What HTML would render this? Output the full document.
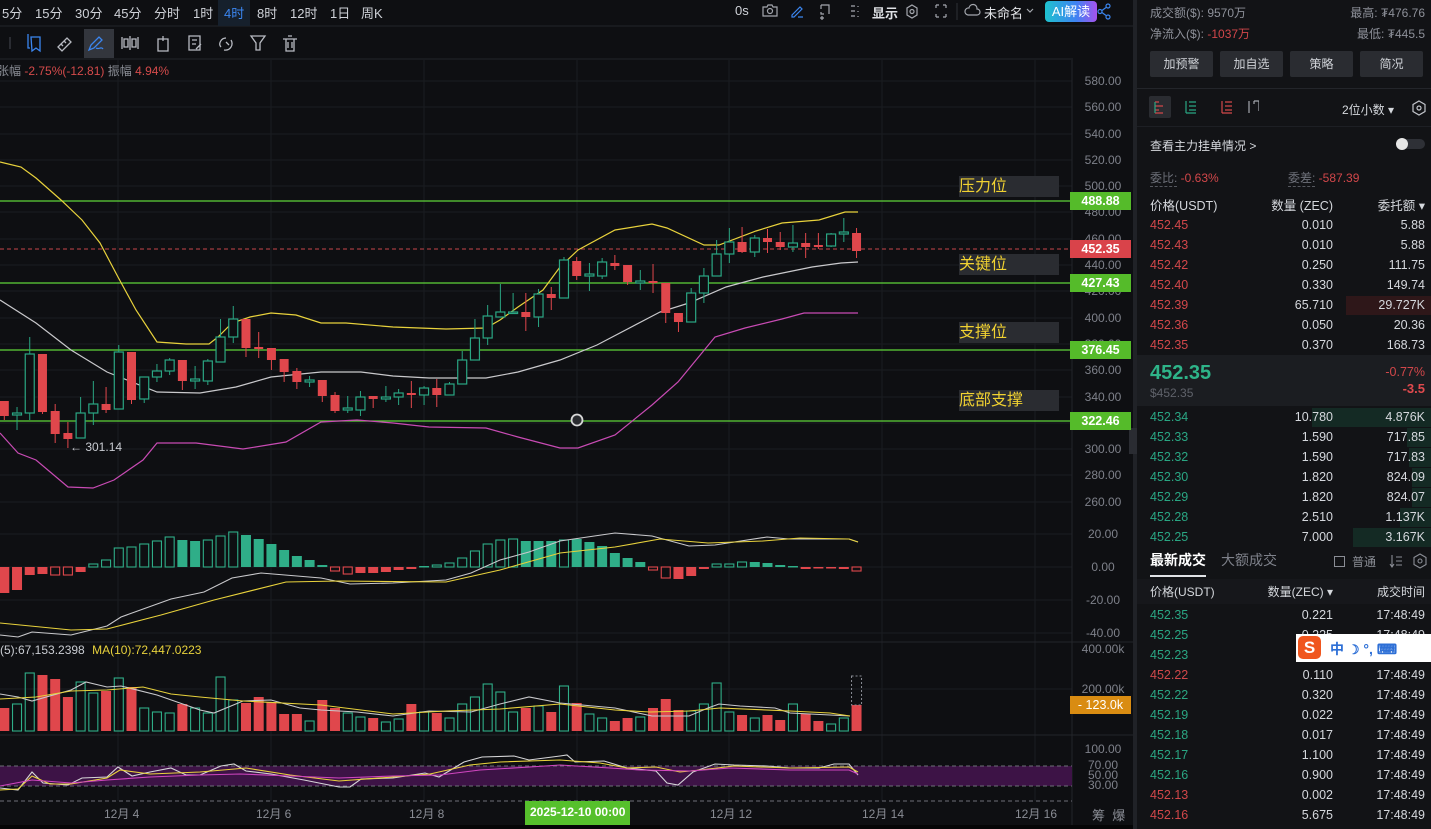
<!DOCTYPE html>
<html><head><meta charset="utf-8">
<style>
*{margin:0;padding:0;box-sizing:border-box}
body{width:1431px;height:829px;background:#0e0f12;overflow:hidden;font-family:"Liberation Sans","Noto Sans CJK SC",sans-serif;color:#c9ccd2;position:relative}
.a{position:absolute;white-space:nowrap}
.tab{position:absolute;top:3px;font-size:13px;color:#cfd2d8}
.ax{position:absolute;left:1074px;width:58px;text-align:center;font-size:12px;color:#7e818a}
.tag{position:absolute;left:1070px;width:61px;height:18px;font-size:12.5px;font-weight:bold;color:#fff;text-align:center;line-height:18px;background:#55bb2a}
.lbl{position:absolute;left:959px;width:100px;height:21px;background:#2a2c31;color:#f1d231;font-size:16px;line-height:21px}
.date{position:absolute;top:805px;font-size:12px;color:#8a8d95}
#rp{position:absolute;left:1137px;top:0;width:294px;height:829px;background:#121316}
.g{color:#2aa683}.r{color:#d2474a}
.row{position:absolute;left:13px;width:275px;height:20px;font-size:12.5px;line-height:20px}
.row span{position:absolute}
.c1{left:0}.c2{right:92px}.c3{right:0}
.btn{position:absolute;top:51px;width:63px;height:26px;background:#2a2c31;border-radius:2px;font-size:12px;line-height:26px;text-align:center;color:#d0d3d8}
</style></head><body>

<svg class="a" style="left:0;top:0" width="1137" height="829" id="sv">
<g stroke="#1b1d22" stroke-width="1">
<line x1="0" y1="26" x2="1137" y2="26" stroke="#23252a"/>
<line x1="0" y1="59" x2="1073" y2="59" stroke="#23252a"/>
</g>
<g id="grid" stroke="#1a1c21" stroke-width="1"></g>
<line x1="1072" y1="60" x2="1072" y2="829" stroke="#23252a"/>
<!-- level lines -->
<g stroke="#5fd33a" stroke-width="1.2">
<line x1="0" y1="201" x2="1072" y2="201"/><line x1="0" y1="283" x2="1072" y2="283"/>
<line x1="0" y1="350" x2="1072" y2="350"/><line x1="0" y1="421" x2="1072" y2="421"/>
</g>
<line x1="0" y1="249" x2="1072" y2="249" stroke="#c6454a" stroke-dasharray="4,3"/>
<g fill="none" stroke-width="1.2">
<polyline stroke="#e8d23c" points="0,162 21,167 36,178 61,200 82,220 100,243 118,277 136,310 157,342 186,344 209,344 218,337 232,323 250,317 271,313 296,315 321,323 346,323 393,327 446,329 486,328 500,320 518,307 543,290 560,267 578,250 615,230 652,224 667,228 704,245 719,245 756,231 782,223 819,220 845,212 858,212"/>
<polyline stroke="#c9c9cc" points="0,300 36,323 71,350 107,372 157,392 200,393 236,387 271,377 321,372 361,372 393,376 429,378 486,378 518,372 560,360 597,345 660,312 689,303 726,287 763,277 812,267 841,263 858,262"/>
<polyline stroke="#c84bb4" points="0,433 18,453 36,460 68,487 93,488 114,480 143,460 157,443 196,443 243,449 286,442 321,422 357,420 393,423 429,427 486,428 518,437 560,448 578,448 615,435 652,405 678,382 715,337 745,328 782,319 804,313 858,313"/>
</g>
<g id="cdl"></g>
<circle cx="577" cy="420" r="5.5" fill="#2a2c30" stroke="#d8d8d8" stroke-width="1.8"/>
<!-- macd -->
<line x1="0" y1="642" x2="1137" y2="642" stroke="#23252a"/>
<line x1="0" y1="735" x2="1137" y2="735" stroke="#23252a"/>
<g id="macd"></g>
<g fill="none" stroke-width="1.1">
<polyline stroke="#c9c9cc" points="0,635 18,637 32,632 71,635 107,626 121,617 171,599 204,592 232,578 261,573 321,578 350,584 393,583 446,580 471,573 500,560 529,552 560,541 615,533 652,536 689,546 715,545 767,537 789,539 849,539 858,542"/>
<polyline stroke="#e8d23c" points="0,623 71,630 107,629 161,615 214,600 286,582 339,581 446,582 500,570 560,553 615,547 660,539 708,543 763,541 800,538 849,539 858,542"/>
</g>
<g id="vol"></g>
<g fill="none" stroke-width="1.1">
<polyline stroke="#c9c9cc" points="0,694 18,697 32,701 71,690 86,682 107,687 121,686 157,695 200,710 214,713 243,701 271,700 300,708 321,710 357,712 393,716 429,711 471,712 500,704 529,697 560,703 615,708 652,716 689,716 708,708 719,704 740,706 775,708 790,713 830,715 850,716"/>
<polyline stroke="#e8d23c" points="0,699 36,697 71,691 107,690 143,687 171,694 200,697 243,701 321,705 393,714 446,711 500,709 560,704 615,710 650,712 689,711 720,708 790,711 830,713 850,716"/>
</g>
<!-- rsi -->
<rect x="0" y="766" width="1072" height="20" fill="#3d1346"/>
<g stroke="#6d6f78" stroke-dasharray="4,3"><line x1="0" y1="766" x2="1072" y2="766"/><line x1="0" y1="786" x2="1072" y2="786"/><line x1="0" y1="801" x2="1072" y2="801"/></g>
<g fill="none" stroke-width="1.1">
<polyline stroke="#d6d6d8" points="0,788 18,790 32,772 43,783 68,785 82,778 107,777 118,767 132,776 150,772 171,768 186,775 200,775 221,766 234,764 246,771 271,774 304,780 339,787 350,787 361,779 393,778 425,773 439,777 464,762 482,757 514,756 529,760 560,756 567,755 575,762 604,761 627,768 656,771 667,783 678,785 693,772 715,764 734,765 767,766 790,768 819,768 834,764 849,764 858,775"/>
<polyline stroke="#e8d23c" points="0,790 18,789 32,776 50,784 71,784 107,778 120,770 150,774 200,772 246,768 290,775 339,781 393,777 430,774 470,765 500,762 560,760 600,763 627,768 656,767 680,772 700,770 734,766 790,768 849,767 858,772"/>
<polyline stroke="#d046c0" points="0,786 32,780 71,783 107,780 150,777 200,775 240,774 290,776 339,778 393,776 440,775 480,770 530,767 560,765 610,768 640,770 690,771 730,768 790,770 849,770 858,774"/>
</g>
<rect x="0" y="825" width="1137" height="4" fill="#050506"/>
<rect x="525" y="801" width="105" height="24" fill="#56c02c"/>
<rect x="1133" y="0" width="4" height="829" fill="#202227"/>
<rect x="1129" y="428" width="8" height="26" fill="#2a2c32"/>
</svg>

<!-- top bar -->
<div class="tab" style="left:2px">5分</div><div class="tab" style="left:35px">15分</div><div class="tab" style="left:75px">30分</div><div class="tab" style="left:114px">45分</div><div class="tab" style="left:154px">分时</div><div class="tab" style="left:193px">1时</div>
<div class="a" style="left:218px;top:0;width:32px;height:26px;background:#16202c"></div>
<div class="tab" style="left:224px;color:#3b86f0">4时</div><div class="tab" style="left:257px">8时</div><div class="tab" style="left:290px">12时</div><div class="tab" style="left:330px">1日</div><div class="tab" style="left:361px">周K</div>

<!-- toolbar icons -->
<div class="a" style="left:84px;top:29px;width:30px;height:29px;background:#33363d"></div>
<svg class="a" style="left:0;top:28px" width="310" height="30" fill="none" stroke="#b8bbc2" stroke-width="1.3">
<line x1="10" y1="9" x2="10" y2="21" stroke="#3a3d44"/>
<path d="M28 6v14h2M31 9h9v14l-4-3-4 3z" stroke="#3b86f0"/>
<path d="M58 19l9-9 4 4-9 9zM61 16l2 2M64 13l2 2"/>
<path d="M89 22l2-5 8-8 3 3-8 8zM96 20c3 2 5-2 7 1" stroke="#3b86f0"/>
<path d="M122 9v12M124 11h4v8h-4zM130 8v14M132 11h4v8h-4zM138 9v12"/>
<path d="M158 11h10v12h-10zM163 8v5"/>
<path d="M189 8h11v14h-11zM192 12h5M192 16h4M196 21l5-5"/>
<path d="M221 19c-3-3 0-9 5-9M224 22c6 1 10-5 7-10M226 14l3 3"/>
<path d="M251 8h14l-5 7v7h-4v-7z"/>
<path d="M283 11h14M286 11v12h8v-12M288 8h4M288 14v6M292 14v6"/>
</svg>
<div class="a" style="left:-3px;top:62px;font-size:12px;color:#8a8d95">张幅 <span style="color:#d54b4b">-2.75%(-12.81)</span> 振幅 <span style="color:#d54b4b">4.94%</span></div>

<!-- top right tools -->
<div class="a" style="left:735px;top:3px;font-size:13px;color:#cfd2d8">0s</div>
<svg class="a" style="left:760px;top:0" width="370" height="24" fill="none" stroke="#a4a7ae" stroke-width="1.2">
<path d="M3 7h4l1-2h4l1 2h4v9h-14z"/><circle cx="10" cy="11" r="2.5"/>
<path d="M32 15l8-8 2 2-8 8h-2zM38 17h5" stroke="#3b86f0"/>
<path d="M61 5h8v9M61 5v4M64 14h-3v-2M62 16v4M60 18h4"/>
<path d="M91 6h4M91 11h4M91 16h4M98 6v1M98 11v1M98 16v1"/>
<path d="M152 5l5 3v7l-5 3-5-3v-7z"/><circle cx="152" cy="11.5" r="2"/>
<path d="M176 5h3M176 5v3M186 5h-3M186 5v3M176 17h3M176 17v-3M186 17h-3M186 17v-3"/>
<line x1="197" y1="3" x2="197" y2="20" stroke="#2a2c31"/>
<path d="M208 15h9a3 3 0 0 0 0-6a4 4 0 0 0-8-1a3.5 3.5 0 0 0-1 7z"/>
<path d="M267 9l3 3 3-3"/>
<circle cx="348" cy="6" r="2" stroke="#3b86f0"/><circle cx="348" cy="17" r="2" stroke="#3b86f0"/><circle cx="340" cy="11.5" r="2" stroke="#3b86f0"/><path d="M342 10.5l4-3M342 12.5l4 3" stroke="#3b86f0"/>
</svg>
<div class="a" style="left:872px;top:3px;font-size:13px;color:#e0e2e6;font-weight:bold">显示</div>
<div class="a" style="left:984px;top:3px;font-size:13px;color:#e0e2e6">未命名</div>
<div class="a" style="left:1045px;top:1px;width:52px;height:21px;border-radius:4px;background:linear-gradient(90deg,#1fc2cf,#3f82f2 60%,#a553ee);color:#fff;font-size:13px;line-height:21px;text-align:center">AI解读</div>

<!-- labels -->
<div class="lbl" style="top:176px">压力位</div>
<div class="lbl" style="top:254px">关键位</div>
<div class="lbl" style="top:322px">支撑位</div>
<div class="lbl" style="top:390px">底部支撑</div>
<div class="a" style="left:70px;top:440px;font-size:12px;color:#c9ccd2">← 301.14</div>

<!-- axis -->
<div class="ax" style="top:74px">580.00</div><div class="ax" style="top:100px">560.00</div><div class="ax" style="top:127px">540.00</div><div class="ax" style="top:153px">520.00</div><div class="ax" style="top:179px">500.00</div><div class="ax" style="top:205px">480.00</div><div class="ax" style="top:232px">460.00</div><div class="ax" style="top:258px">440.00</div><div class="ax" style="top:284px">420.00</div><div class="ax" style="top:311px">400.00</div><div class="ax" style="top:337px">380.00</div><div class="ax" style="top:363px">360.00</div><div class="ax" style="top:390px">340.00</div><div class="ax" style="top:416px">320.00</div><div class="ax" style="top:442px">300.00</div><div class="ax" style="top:468px">280.00</div><div class="ax" style="top:495px">260.00</div>
<div class="tag" style="top:192px">488.88</div>
<div class="tag" style="top:240px;background:#d9434a">452.35</div>
<div class="tag" style="top:274px">427.43</div>
<div class="tag" style="top:341px">376.45</div>
<div class="tag" style="top:412px">322.46</div>
<div class="ax" style="top:527px">20.00</div><div class="ax" style="top:560px">0.00</div><div class="ax" style="top:593px">-20.00</div><div class="ax" style="top:626px">-40.00</div>
<div class="ax" style="top:642px">400.00k</div><div class="ax" style="top:682px">200.00k</div>
<div class="tag" style="top:696px;background:#d98c12;font-weight:normal">- 123.0k</div>
<div class="ax" style="top:742px">100.00</div><div class="ax" style="top:758px">70.00</div><div class="ax" style="top:768px">50.00</div><div class="ax" style="top:778px">30.00</div>
<div class="a" style="left:0;top:643px;font-size:12px;color:#c9ccd2">(5):67,153.2398 <span style="color:#e8d23c;margin-left:4px">MA(10):72,447.0223</span></div>
<div class="date" style="left:104px">12月 4</div><div class="date" style="left:256px">12月 6</div><div class="date" style="left:409px">12月 8</div>
<div class="date" style="left:530px;color:#fff;font-weight:bold">2025-12-10 00:00</div>
<div class="date" style="left:710px">12月 12</div><div class="date" style="left:862px">12月 14</div><div class="date" style="left:1015px">12月 16</div>
<div class="date" style="left:1092px;font-size:13px">筹&nbsp;&nbsp;爆</div>

<!-- right panel -->
<div id="rp">
<div class="a" style="left:13px;top:4px;font-size:12px;color:#8d9099">成交额($): 9570万</div>
<div class="a" style="right:6px;top:4px;font-size:12px;color:#8d9099">最高: ₮476.76</div>
<div class="a" style="left:13px;top:25px;font-size:12px;color:#8d9099">净流入($): <span class="r">-1037万</span></div>
<div class="a" style="right:6px;top:25px;font-size:12px;color:#8d9099">最低: ₮445.5</div>
<div class="btn" style="left:13px">加预警</div><div class="btn" style="left:83px">加自选</div><div class="btn" style="left:153px">策略</div><div class="btn" style="left:223px">简况</div>
<div class="a" style="left:0;top:88px;width:294px;height:1px;background:#23252a"></div>
<div class="a" style="left:12px;top:96px;width:22px;height:22px;background:#2a2c31;border-radius:2px"></div>
<svg class="a" style="left:12px;top:96px" width="110" height="22" fill="none" stroke-width="1.2">
<path d="M6 6h4M6 10h8M6 14h4M6 17h8" stroke="#d2474a"/><path d="M6 6v11" stroke="#2aa683"/>
<path d="M37 5v12M40 6h7M40 10h7M40 14h7M37 17h10" stroke="#2aa683"/>
<path d="M73 5v12M76 6h7M76 10h7M76 14h7M73 17h10" stroke="#d2474a"/>
<path d="M105 5h5v10M105 5v3M100 5v12" stroke="#a4a7ae"/>
</svg>
<div class="a" style="left:205px;top:101px;font-size:12px;color:#d5d8dd">2位小数 ▾</div>
<svg class="a" style="left:274px;top:99px" width="16" height="18" fill="none" stroke="#c2c5cb" stroke-width="1.2"><path d="M8 2l6 3.5v7L8 16l-6-3.5v-7z"/><circle cx="8" cy="9" r="2"/></svg>
<div class="a" style="left:0;top:126px;width:294px;height:1px;background:#1d1f24"></div>
<div class="a" style="left:13px;top:137px;font-size:12px;color:#d5d8dd">查看主力挂单情况 &gt;</div>
<div class="a" style="left:259px;top:139px;width:29px;height:10px;border-radius:5px;background:#2e3036"></div>
<div class="a" style="left:259px;top:138px;width:12px;height:12px;border-radius:6px;background:#e6e6e6"></div>
<div class="a" style="left:13px;top:169px;font-size:12px;color:#6e717a">委比: <span class="r">-0.63%</span></div>
<div class="a" style="left:151px;top:169px;font-size:12px;color:#6e717a">委差: <span class="r">-587.39</span></div>
<div class="a" style="left:13px;top:186px;width:27px;border-top:1px dashed #55585f"></div>
<div class="a" style="left:151px;top:186px;width:27px;border-top:1px dashed #55585f"></div>
<div class="row" style="top:196px;color:#d5d8dd"><span class="c1">价格(USDT)</span><span class="c2">数量 (ZEC)</span><span class="c3">委托额 ▾</span></div>
<div class="a" style="left:209px;top:296px;width:85px;height:19px;background:#2e1719"></div>
<div id="book"></div>
<div class="a" style="left:0;top:355px;width:294px;height:51px;background:#1b1d21"></div>
<div class="a g" style="left:13px;top:362px;font-size:20px;font-weight:bold;color:#2eb489">452.35</div>
<div class="a" style="left:13px;top:386px;font-size:12px;color:#5f626a">$452.35</div>
<div class="a r" style="right:6px;top:365px;font-size:12.5px">-0.77%</div>
<div class="a r" style="right:6px;top:381px;font-size:13px;font-weight:bold;color:#e04a4e">-3.5</div>
<div class="a" style="left:175px;top:408px;width:119px;height:19px;background:#142a24"></div>
<div class="a" style="left:270px;top:428px;width:24px;height:19px;background:#142a24"></div>
<div class="a" style="left:272px;top:448px;width:22px;height:19px;background:#142a24"></div>
<div class="a" style="left:275px;top:468px;width:19px;height:19px;background:#142a24"></div>
<div class="a" style="left:275px;top:488px;width:19px;height:19px;background:#142a24"></div>
<div class="a" style="left:263px;top:508px;width:31px;height:19px;background:#142a24"></div>
<div class="a" style="left:216px;top:528px;width:78px;height:19px;background:#142a24"></div>
<div id="bids"></div>
<div class="a" style="left:13px;top:550px;font-size:14px;color:#fff;font-weight:bold">最新成交</div>
<div class="a" style="left:84px;top:550px;font-size:14px;color:#7e818a">大额成交</div>
<div class="a" style="left:13px;top:575px;width:56px;height:2px;background:#e0e2e6"></div>
<div class="a" style="left:197px;top:556px;width:11px;height:11px;border:1px solid #8a8d95"></div>
<div class="a" style="left:215px;top:553px;font-size:12px;color:#8a8d95">普通</div>
<svg class="a" style="left:252px;top:552px" width="40" height="18" fill="none" stroke="#8a8d95" stroke-width="1.1"><path d="M3 3v11M1 12l2 3 2-3M7 5h6M7 9h6M7 13h6"/><path d="M31 2l6 3.5v7L31 16l-6-3.5v-7z"/><circle cx="31" cy="9" r="2"/></svg>
<div class="a" style="left:0;top:579px;width:294px;height:25px;background:#16171b"></div>
<div class="row" style="top:582px;color:#d5d8dd;font-size:12px"><span class="c1">价格(USDT)</span><span class="c2">数量(ZEC) ▾</span><span class="c3">成交时间</span></div>
<div id="trades"></div>
<div class="a" style="left:159px;top:634px;width:135px;height:28px;background:#fff"></div>
<div class="a" style="left:161px;top:636px;width:23px;height:23px;background:#f0561e;border-radius:5px;color:#fff;font-weight:bold;font-size:17px;line-height:23px;text-align:center">S</div>
<div class="a" style="left:193px;top:639px;font-size:14px;color:#2d6fd6;font-weight:bold">中 <span style="font-size:13px">☽</span> °, <span>⌨</span></div>
</div>

<script>
function el(p,t,a){var e=document.createElementNS("http://www.w3.org/2000/svg",t);for(var k in a)e.setAttribute(k,a[k]);document.getElementById(p).appendChild(e);}
var g=document.getElementById('grid');
[81,107,134,160,186,212,239,265,291,318,344,370,397,423,449,475,502,534,567,600,633,689].forEach(function(y){el('grid','line',{x1:0,y1:y,x2:1072,y2:y})});
[118,271,424,577,729,882,1035].forEach(function(x){el('grid','line',{x1:x,y1:60,x2:x,y2:801})});
var GC="#2aa683",RC="#e0474c";
var C=[["r",401,416,401,420],["g",413,415,407,430],["g",354,413,337,420],["r",354,412,354,414],["r",411,434,404,443],["r",433,439,422,448],["g",413,438,397,438],["g",404,413,381,425],["r",404,410,387,413],["g",352,409,345,409],["r",352,400,352,404],["g",377,399,377,403],["g",371,377,364,382],["g",360,371,358,375],["r",360,381,360,390],["g",379,381,366,389],["g",361,381,359,385],["g",337,362,319,362],["g",319,337,306,343],["r",319,348,319,357],["r",347,349,332,358],["r",348,360,348,370],["r",359,372,359,382],["r",371,382,368,389],["g",380,382,376,387],["r",380,396,380,402],["r",395,411,392,413],["g",408,410,396,413],["g",397,410,391,416],["r",396,399,396,408],["g",397,399,386,402],["g",393,397,389,405],["r",393,395,381,408],["g",388,395,386,405],["r",388,395,379,407],["g",384,395,382,395],["g",360,384,351,384],["g",338,360,319,360],["g",316,338,305,345],["g",312,317,284,317],["g",312,313,293,313],["r",312,317,293,331],["g",294,317,289,327],["r",294,298,287,310],
["g",260,298,257,298],["r",261,276,257,280],["g",274,276,263,291],["g",262,276,258,279],["r",263,266,255,270],["r",265,282,265,285],["g",281,283,270,290],["r",281,283,264,293],["r",283,313,283,323],["r",313,322,313,332],["g",293,322,288,322],["g",276,293,268,303],["g",254,276,240,276],["g",242,254,228,263],["r",242,252,227,253],["g",238,252,235,257],["r",238,242,229,253],["r",242,247,232,250],["g",243,247,225,252],["r",243,247,233,258],["r",245,247,233,249],["g",234,246,233,247],["g",232,234,218,242],["r",233,251,228,258]];
function X(i){return 4.3+i*12.72;}
C.forEach(function(c,i){var x=X(i),col=c[0]=="g"?GC:RC,h=Math.max(c[2]-c[1],1.5);
el('cdl','line',{x1:x,y1:c[3],x2:x,y2:c[4],stroke:col,"stroke-width":1});
if(c[0]=="g")el('cdl','rect',{x:x-4.5,y:c[1],width:9,height:h,fill:"#0e0f12",stroke:col,"stroke-width":1.2});
else el('cdl','rect',{x:x-4.5,y:c[1],width:9,height:h,fill:col});});
// macd: [color,solid(1)/hollow(0),y]
var M=[["r",1,593],["r",1,590],["r",1,575],["r",1,574],["r",0,575],["r",0,575],["r",1,572],["g",0,564],["g",0,560],["g",0,548],["g",0,547],["g",0,544],["g",0,541],["g",0,537],["g",1,540],["g",1,541],["g",0,540],["g",0,536],["g",0,532],["g",1,535],["g",1,539],["g",1,544],["g",1,550],["g",1,556],["g",1,560],["g",1,565],["r",0,571],["r",0,574],["r",1,573],["r",1,573],["r",1,572],["r",1,570],["r",1,569],["g",1,566],["g",0,565],["g",0,563],["g",0,558],["g",0,551],["g",0,544],["g",0,540],["g",0,539],["g",1,541],["g",1,541],["g",1,541],
["g",0,540],["g",1,539],["g",1,542],["g",1,546],["g",1,553],["g",1,558],["g",1,562],["r",0,570],["r",0,578],["r",1,579],["r",1,576],["r",1,569],["g",0,564],["g",0,564],["g",0,562],["g",1,562],["g",1,563],["g",1,565],["g",1,566],["r",1,569],["r",1,568],["r",1,568],["r",1,569],["r",0,571]];
M.forEach(function(m,i){var x=X(i),col=m[0]=="g"?"#2fae88":RC,y1=Math.min(m[2],567),h=Math.max(Math.abs(m[2]-567),1.5);
if(m[1])el('macd','rect',{x:x-5,y:y1,width:10,height:h,fill:col});else el('macd','rect',{x:x-4.5,y:y1,width:9,height:h,fill:"none",stroke:col,"stroke-width":1.1});});
var V=[708,704,673,675,679,697,682,693,691,678,687,708,712,713,704,708,713,677,700,703,697,702,714,714,721,700,708,713,717,718,722,719,704,712,713,718,704,697,684,692,712,708,706,712,686,703,714,718,721,718,717,708,699,710,711,704,683,712,715,718,715,720,704,714,721,724,718,705];
V.forEach(function(v,i){var x=X(i),c=C[i][0];if(c=="r")el('vol','rect',{x:x-5,y:v,width:10,height:731-v,fill:RC});else el('vol','rect',{x:x-4.5,y:v,width:9,height:731-v,fill:"none",stroke:"#2fae88","stroke-width":1.1});});
el('vol','rect',{x:X(67)-5,y:676,width:10,height:29,fill:"none",stroke:"#8a8d95","stroke-dasharray":"2,2"});
function rows(id,top,data,cls){var h="";data.forEach(function(d,i){h+='<div class="row '+cls[i]+'" style="top:'+(top+i*20)+'px"><span class="c1">'+d[0]+'</span><span class="c2" style="color:#d5d8dd">'+d[1]+'</span><span class="c3" style="color:#d5d8dd">'+d[2]+'</span></div>';});document.getElementById(id).innerHTML=h;}
rows('book',215,[["452.45","0.010","5.88"],["452.43","0.010","5.88"],["452.42","0.250","111.75"],["452.40","0.330","149.74"],["452.39","65.710","29.727K"],["452.36","0.050","20.36"],["452.35","0.370","168.73"]],["r","r","r","r","r","r","r"]);
rows('bids',407,[["452.34","10.780","4.876K"],["452.33","1.590","717.85"],["452.32","1.590","717.83"],["452.30","1.820","824.09"],["452.29","1.820","824.07"],["452.28","2.510","1.137K"],["452.25","7.000","3.167K"]],["g","g","g","g","g","g","g"]);
rows('trades',605,[["452.35","0.221","17:48:49"],["452.25","0.225","17:48:49"],["452.23","0.051","17:48:49"],["452.22","0.110","17:48:49"],["452.22","0.320","17:48:49"],["452.19","0.022","17:48:49"],["452.18","0.017","17:48:49"],["452.17","1.100","17:48:49"],["452.16","0.900","17:48:49"],["452.13","0.002","17:48:49"],["452.16","5.675","17:48:49"]],["g","g","g","r","g","g","g","g","g","r","r"]);
</script>
</body></html>
